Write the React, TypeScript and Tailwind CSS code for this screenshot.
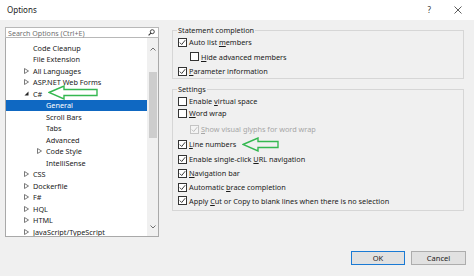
import React from "react"

interface TreeItem {
    label: string;
    level: number;
    expander: "none" | "collapsed" | "expanded";
    selected?: boolean;
}

interface CheckRow {
    parts: [string, string, string];
    checked: boolean;
    indent?: boolean;
    disabled?: boolean;
}

const treeItems: TreeItem[] = [
    { label: "Code Cleanup", level: 0, expander: "none" },
    { label: "File Extension", level: 0, expander: "none" },
    { label: "All Languages", level: 0, expander: "collapsed" },
    { label: "ASP.NET Web Forms", level: 0, expander: "collapsed" },
    { label: "C#", level: 0, expander: "expanded" },
    { label: "General", level: 1, expander: "none", selected: true },
    { label: "Scroll Bars", level: 1, expander: "none" },
    { label: "Tabs", level: 1, expander: "none" },
    { label: "Advanced", level: 1, expander: "none" },
    { label: "Code Style", level: 1, expander: "collapsed" },
    { label: "IntelliSense", level: 1, expander: "none" },
    { label: "CSS", level: 0, expander: "collapsed" },
    { label: "Dockerfile", level: 0, expander: "collapsed" },
    { label: "F#", level: 0, expander: "collapsed" },
    { label: "HQL", level: 0, expander: "collapsed" },
    { label: "HTML", level: 0, expander: "collapsed" },
    { label: "JavaScript/TypeScript", level: 0, expander: "collapsed" },
]

const Expander: React.FC<{ kind: TreeItem["expander"] }> = ({ kind }) => {
    if (kind === "collapsed") {
        return (
            <svg width="5" height="6" viewBox="0 0 5 6">
                <path d="M0.5 0.5 L4.5 3 L0.5 5.5 Z" fill="none" stroke="#6b6b6b" strokeWidth="0.9" />
            </svg>
        )
    }
    if (kind === "expanded") {
        return (
            <svg width="5" height="5" viewBox="0 0 5 5">
                <path d="M4.5 0.5 L4.5 4.5 L0.5 4.5 Z" fill="#262626" />
            </svg>
        )
    }
    return null
}

const CheckBox: React.FC<{ checked: boolean; disabled?: boolean }> = ({ checked, disabled }) => (
    <div
        className={
            disabled
                ? "w-[9px] h-[9px] border border-[#c4c4c4] bg-[#f4f4f4] flex items-center justify-center shrink-0"
                : "w-[9px] h-[9px] border border-[#333333] bg-white flex items-center justify-center shrink-0"
        }
    >
        {checked && (
            <svg width="7" height="7" viewBox="0 0 7 7">
                <path
                    d="M0.8 3.6 L2.7 5.5 L6.2 1.2"
                    fill="none"
                    stroke={disabled ? "#b8b8b8" : "#2a2a2a"}
                    strokeWidth="0.9"
                />
            </svg>
        )}
    </div>
)

const Row: React.FC<{ row: CheckRow; className: string }> = ({ row, className }) => (
    <div className={className + " flex items-center" + (row.indent ? " pl-[12px]" : "")}>
        <div className="flex items-center gap-[2px]">
            <CheckBox checked={row.checked} disabled={row.disabled} />
            <span className={row.disabled ? "whitespace-nowrap text-[#a6a6a6]" : "whitespace-nowrap text-[#1b1b1b]"}>
                {row.parts[0]}
                <span className="underline underline-offset-[1px]">{row.parts[1]}</span>
                {row.parts[2]}
            </span>
        </div>
    </div>
)

const GreenArrow: React.FC<{ className: string; w: number; h: number }> = ({ className, w, h }) => {
    const head = h + 1
    const shaftTop = h * 0.3
    const shaftBottom = h * 0.7
    return (
        <svg className={className} width={w} height={h} viewBox={`0 0 ${w} ${h}`}>
            <path
                d={`M1 ${h / 2} L${head} 1 L${head} ${shaftTop} L${w - 1} ${shaftTop} L${w - 1} ${shaftBottom} L${head} ${shaftBottom} L${head} ${h - 1} Z`}
                fill="none"
                stroke="#34b850"
                strokeWidth="1.4"
            />
        </svg>
    )
}

const App: React.FC = () => {
    const completion: CheckRow[] = [
        { parts: ["Auto list ", "m", "embers"], checked: true },
        { parts: ["", "H", "ide advanced members"], checked: false, indent: true },
        { parts: ["", "P", "arameter information"], checked: true },
    ]

    const settings: CheckRow[] = [
        { parts: ["Enable ", "v", "irtual space"], checked: false },
        { parts: ["", "W", "ord wrap"], checked: false },
        { parts: ["", "S", "how visual glyphs for word wrap"], checked: true, indent: true, disabled: true },
        { parts: ["", "L", "ine numbers"], checked: true },
        { parts: ["Enable single-click ", "U", "RL navigation"], checked: true },
        { parts: ["", "N", "avigation bar"], checked: true },
        { parts: ["Automatic ", "b", "race completion"], checked: true },
        { parts: ["Apply ", "C", "ut or Copy to blank lines when there is no selection"], checked: true },
    ]

    const completionHeights = ["h-[14px]", "h-[15px]", "h-[14px]"]
    const settingsHeights = [
        "h-[14px]",
        "h-[10px]",
        "h-[14px] mt-[4px]",
        "h-[14px] mt-[1px]",
        "h-[14px] mt-[1px]",
        "h-[14px]",
        "h-[14px]",
        "h-[13px]",
    ]

    return (
        <div className="relative w-[474px] h-[276px] bg-[#f0f0f0] overflow-hidden text-[7.3px] leading-[10px] text-[#1b1b1b] font-['Noto_Sans',sans-serif]">
            {/* title bar */}
            <div className="h-[20px] bg-white flex items-center justify-between pl-[7px] pr-[12px]">
                <span className="text-[8px]">Options</span>
                <div className="flex items-center gap-[23px]">
                    <span className="text-[8px] text-[#333]">?</span>
                    <svg width="8" height="8" viewBox="0 0 8 8">
                        <path d="M0.5 0.5 L7.5 7.5 M7.5 0.5 L0.5 7.5" stroke="#333" strokeWidth="0.8" />
                    </svg>
                </div>
            </div>

            <div className="flex h-[231px] pl-[5px] pt-[5px]">
                {/* left pane */}
                <div className="w-[154px] pt-[2px] flex flex-col">
                    <div className="h-[11px] border border-[#b8b8b8] bg-white flex items-center justify-between pl-[2px] pr-[3px]">
                        <span className="text-[7.1px] text-[#707070]">Search Options (Ctrl+E)</span>
                        <svg width="7" height="7" viewBox="0 0 7 7">
                            <circle cx="4.3" cy="2.7" r="2" fill="none" stroke="#333" strokeWidth="0.9" />
                            <path d="M2.9 4.1 L0.6 6.4" stroke="#333" strokeWidth="1.1" />
                        </svg>
                    </div>
                    <div className="h-[199px] border border-[#a9a9a9] border-t-0 bg-white flex overflow-hidden">
                        <div className="flex-1 pt-[4px]">
                            {treeItems.map((item) => (
                                <div
                                    key={item.label}
                                    className={
                                        item.selected
                                            ? "h-[11.5px] flex items-center bg-[#0f68c2] text-white"
                                            : "h-[11.5px] flex items-center"
                                    }
                                    style={{ paddingLeft: 18 + item.level * 13 }}
                                >
                                    <div className="w-[9px] flex items-center">
                                        <Expander kind={item.expander} />
                                    </div>
                                    <span className="whitespace-nowrap">{item.label}</span>
                                </div>
                            ))}
                        </div>
                        {/* scrollbar */}
                        <div className="w-[11px] bg-[#f0f0f0] flex flex-col items-center">
                            <div className="h-[13px] flex items-end justify-center">
                                <svg width="6" height="4" viewBox="0 0 6 4">
                                    <path d="M0.5 3.5 L3 1 L5.5 3.5" fill="none" stroke="#606060" strokeWidth="0.9" />
                                </svg>
                            </div>
                            <div className="mt-[21px] w-[8px] h-[66px] bg-[#cdcdcd]" />
                            <div className="flex-1" />
                            <div className="h-[11px] flex items-start justify-center">
                                <svg width="6" height="4" viewBox="0 0 6 4">
                                    <path d="M0.5 0.5 L3 3 L5.5 0.5" fill="none" stroke="#606060" strokeWidth="0.9" />
                                </svg>
                            </div>
                        </div>
                    </div>
                </div>

                {/* right pane */}
                <div className="ml-[13px] w-[292px] flex flex-col">
                    <fieldset className="border border-[#d6d6d6] px-[5px]">
                        <legend className="px-[1px] leading-[10px] -ml-[1px]">Statement completion</legend>
                        {completion.map((row, i) => (
                            <Row key={row.parts.join("")} row={row} className={completionHeights[i]} />
                        ))}
                    </fieldset>
                    <fieldset className="mt-[5px] border border-[#d6d6d6] px-[5px] pb-[3px]">
                        <legend className="px-[1px] leading-[10px] -ml-[1px]">Settings</legend>
                        {settings.map((row, i) => (
                            <Row key={row.parts.join("")} row={row} className={settingsHeights[i]} />
                        ))}
                    </fieldset>
                </div>
            </div>

            {/* buttons */}
            <div className="flex justify-end gap-[6px] pr-[8px]">
                <button className="w-[54px] h-[14px] border border-[#1a7ad4] bg-[#e1e1e1] text-[7.5px] leading-[10px] text-[#1b1b1b]">
                    OK
                </button>
                <button className="w-[55px] h-[14px] border border-[#adadad] bg-[#e1e1e1] text-[7.5px] leading-[10px] text-[#1b1b1b]">
                    Cancel
                </button>
            </div>

            {/* annotations */}
            <GreenArrow className="absolute left-[48px] top-[85px]" w={50} h={15} />
            <GreenArrow className="absolute left-[242px] top-[137px]" w={37} h={15} />
        </div>
    )
}

export default App
